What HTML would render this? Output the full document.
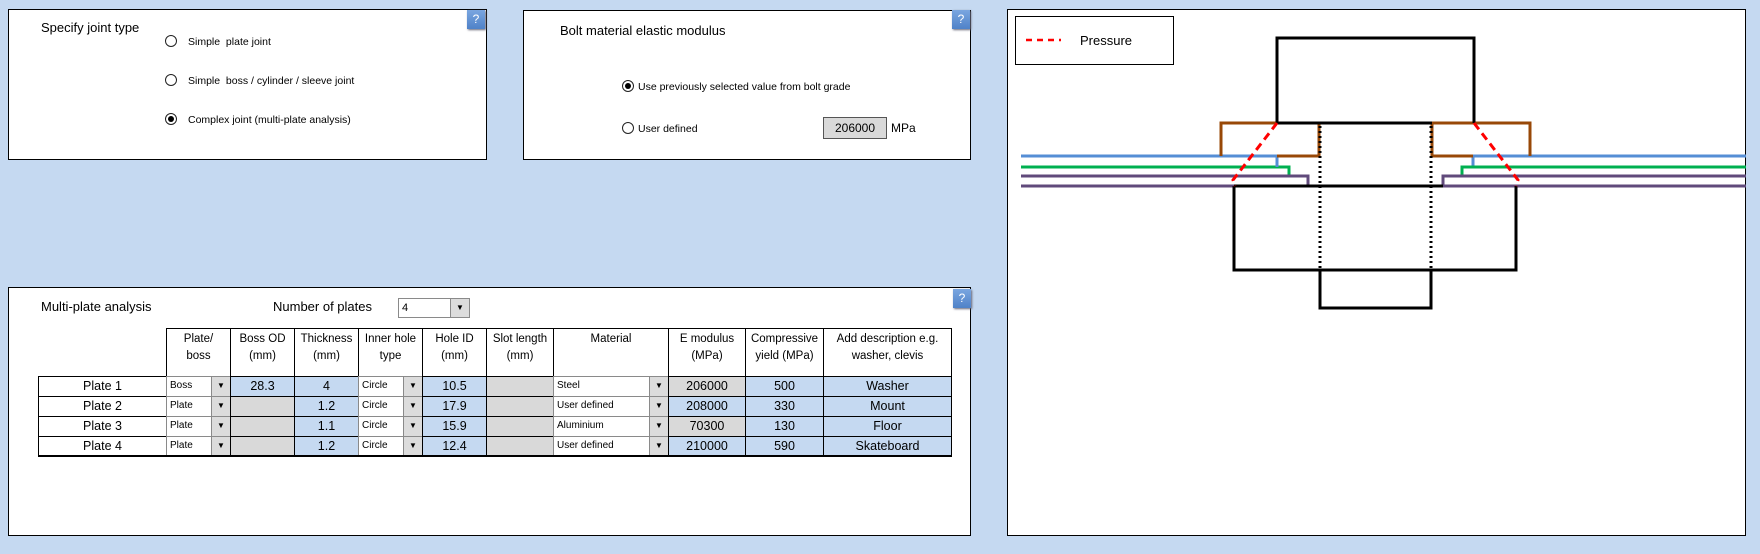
<!DOCTYPE html>
<html><head><meta charset="utf-8"><style>
*{box-sizing:border-box;margin:0;padding:0}
body{width:1760px;height:554px;background:#c5d9f1;position:relative;overflow:hidden;font-family:"Liberation Sans",sans-serif;color:#000}
.p{position:absolute;background:#fff;border:1px solid #000}
.a{position:absolute;white-space:nowrap}
.help{position:absolute;width:18px;height:19px;background:linear-gradient(#7aa6e0,#4f82c8);color:#fff;font-size:12px;text-align:center;line-height:19px;box-shadow:1px 1px 2px #667}
.r{position:absolute;width:12px;height:12px;border:1px solid #222;border-radius:50%;background:#fff}
.r.on::after{content:"";position:absolute;left:2px;top:2px;width:6px;height:6px;border-radius:50%;background:#000}
.sm{font-size:10.5px}
.c{position:absolute;border:1px solid #000;font-size:12.5px;text-align:center;line-height:19px}
.b{background:#c5d9f1}.g{background:#d9d9d9}.w{background:#fff}
.h{position:absolute;border:1px solid #000;background:#fff;font-size:11.5px;text-align:center;line-height:17px;padding-top:2px}
.dd{position:absolute;background:#fff;border:1px solid #8a8a8a;font-size:10px;line-height:18px;padding-left:3px}
.ar{position:absolute;right:0;top:0;bottom:0;width:19px;background:#dcdcdc;border-left:1px solid #8a8a8a;font-size:8px;text-align:center;line-height:18px}
</style></head><body>

<div class="p" style="left:8px;top:9px;width:479px;height:151px"></div>
<div class="help" style="left:467px;top:10px;">?</div>
<div class="a" style="left:41px;top:20px;font-size:13px">Specify joint type</div>
<div class="r" style="left:165px;top:35px"></div><div class="a sm" style="left:188px;top:36px">Simple&nbsp; plate joint</div>
<div class="r" style="left:165px;top:74px"></div><div class="a sm" style="left:188px;top:75px">Simple&nbsp; boss / cylinder / sleeve joint</div>
<div class="r on" style="left:165px;top:113px"></div><div class="a sm" style="left:188px;top:114px">Complex joint (multi-plate analysis)</div>

<div class="p" style="left:523px;top:10px;width:448px;height:150px"></div>
<div class="help" style="left:952px;top:10px;">?</div>
<div class="a" style="left:560px;top:23px;font-size:13px">Bolt material elastic modulus</div>
<div class="r on" style="left:622px;top:80px"></div><div class="a sm" style="left:638px;top:81px">Use previously selected value from bolt grade</div>
<div class="r" style="left:622px;top:122px"></div><div class="a sm" style="left:638px;top:123px">User defined</div>
<div class="a" style="left:823px;top:117px;width:64px;height:22px;background:#d9d9d9;border:1px solid #555;font-size:12px;text-align:center;line-height:20px">206000</div>
<div class="a" style="left:891px;top:121px;font-size:12px">MPa</div>

<div class="p" style="left:1007px;top:9px;width:739px;height:527px"></div>
<svg class="a" style="left:1007px;top:0" width="740" height="340" viewBox="1007 0 740 340">
<rect x="1015.5" y="16.5" width="158" height="48" fill="none" stroke="#000"/>
<line x1="1026" y1="40" x2="1061" y2="40" stroke="#f00" stroke-width="2.5" stroke-dasharray="6,5"/>
<text x="1080" y="45" font-family="Liberation Sans" font-size="13">Pressure</text>
<g fill="none" stroke-width="3">
<path d="M1021 167H1289V176" stroke="#00b050"/>
<path d="M1021 176H1308V186M1021 186H1234" stroke="#604a7b"/>
<path d="M1021 156H1277V167" stroke="#558ed5"/>
<path d="M1746 156H1473V167" stroke="#558ed5"/>
<path d="M1746 167H1462V176" stroke="#00b050"/>
<path d="M1746 176H1443V186H1746" stroke="#604a7b"/>
<path d="M1221 156V123H1319V156H1277" stroke="#984807"/>
<path d="M1473 156H1432V123H1530V156" stroke="#984807"/>
<path d="M1277 123V38H1474V123M1277 123H1432" stroke="#000"/>
<path d="M1234 186H1443M1234 186V270H1516V186" stroke="#000"/>
<path d="M1320 270V308H1431V270" stroke="#000"/>
<line x1="1320" y1="126" x2="1320" y2="270" stroke="#000" stroke-dasharray="2,3"/>
<line x1="1431" y1="126" x2="1431" y2="270" stroke="#000" stroke-dasharray="2,3"/>
<path d="M1277 123L1233 180L1235 186M1474 123L1518 180L1516 186" stroke="#f00" stroke-dasharray="8,5"/>
</g>
</svg>

<div class="p" style="left:8px;top:287px;width:963px;height:249px"></div>
<div class="help" style="left:953px;top:289px;">?</div>
<div class="a" style="left:41px;top:299px;font-size:13px">Multi-plate analysis</div>
<div class="a" style="left:273px;top:299px;font-size:13px">Number of plates</div>
<div class="dd" style="left:398px;top:298px;width:72px;height:20px;font-size:11px">4<div class="ar">▼</div></div>

<div class="h" style="left:166px;top:328px;width:65px;height:49px">Plate/<br>boss</div>
<div class="h" style="left:230px;top:328px;width:65px;height:49px">Boss OD<br>(mm)</div>
<div class="h" style="left:294px;top:328px;width:65px;height:49px">Thickness<br>(mm)</div>
<div class="h" style="left:358px;top:328px;width:65px;height:49px">Inner hole<br>type</div>
<div class="h" style="left:422px;top:328px;width:65px;height:49px">Hole ID<br>(mm)</div>
<div class="h" style="left:486px;top:328px;width:68px;height:49px">Slot length<br>(mm)</div>
<div class="h" style="left:553px;top:328px;width:116px;height:49px">Material</div>
<div class="h" style="left:668px;top:328px;width:78px;height:49px">E modulus<br>(MPa)</div>
<div class="h" style="left:745px;top:328px;width:79px;height:49px">Compressive<br>yield (MPa)</div>
<div class="h" style="left:823px;top:328px;width:129px;height:49px">Add description e.g.<br>washer, clevis</div>

<div class="c w" style="left:38px;top:376px;width:129px;height:21px">Plate 1</div>
<div class="dd" style="left:166px;top:376px;width:65px;height:21px">Boss<div class="ar">▼</div></div>
<div class="c b" style="left:230px;top:376px;width:65px;height:21px">28.3</div>
<div class="c b" style="left:294px;top:376px;width:65px;height:21px">4</div>
<div class="dd" style="left:358px;top:376px;width:65px;height:21px">Circle<div class="ar">▼</div></div>
<div class="c b" style="left:422px;top:376px;width:65px;height:21px">10.5</div>
<div class="c g" style="left:486px;top:376px;width:68px;height:21px"></div>
<div class="dd" style="left:553px;top:376px;width:116px;height:21px">Steel<div class="ar">▼</div></div>
<div class="c g" style="left:668px;top:376px;width:78px;height:21px">206000</div>
<div class="c b" style="left:745px;top:376px;width:79px;height:21px">500</div>
<div class="c b" style="left:823px;top:376px;width:129px;height:21px">Washer</div>

<div class="c w" style="left:38px;top:396px;width:129px;height:21px">Plate 2</div>
<div class="dd" style="left:166px;top:396px;width:65px;height:21px">Plate<div class="ar">▼</div></div>
<div class="c g" style="left:230px;top:396px;width:65px;height:21px"></div>
<div class="c b" style="left:294px;top:396px;width:65px;height:21px">1.2</div>
<div class="dd" style="left:358px;top:396px;width:65px;height:21px">Circle<div class="ar">▼</div></div>
<div class="c b" style="left:422px;top:396px;width:65px;height:21px">17.9</div>
<div class="c g" style="left:486px;top:396px;width:68px;height:21px"></div>
<div class="dd" style="left:553px;top:396px;width:116px;height:21px">User defined<div class="ar">▼</div></div>
<div class="c b" style="left:668px;top:396px;width:78px;height:21px">208000</div>
<div class="c b" style="left:745px;top:396px;width:79px;height:21px">330</div>
<div class="c b" style="left:823px;top:396px;width:129px;height:21px">Mount</div>

<div class="c w" style="left:38px;top:416px;width:129px;height:21px">Plate 3</div>
<div class="dd" style="left:166px;top:416px;width:65px;height:21px">Plate<div class="ar">▼</div></div>
<div class="c g" style="left:230px;top:416px;width:65px;height:21px"></div>
<div class="c b" style="left:294px;top:416px;width:65px;height:21px">1.1</div>
<div class="dd" style="left:358px;top:416px;width:65px;height:21px">Circle<div class="ar">▼</div></div>
<div class="c b" style="left:422px;top:416px;width:65px;height:21px">15.9</div>
<div class="c g" style="left:486px;top:416px;width:68px;height:21px"></div>
<div class="dd" style="left:553px;top:416px;width:116px;height:21px">Aluminium<div class="ar">▼</div></div>
<div class="c g" style="left:668px;top:416px;width:78px;height:21px">70300</div>
<div class="c b" style="left:745px;top:416px;width:79px;height:21px">130</div>
<div class="c b" style="left:823px;top:416px;width:129px;height:21px">Floor</div>

<div class="c w" style="left:38px;top:436px;width:129px;height:21px">Plate 4</div>
<div class="dd" style="left:166px;top:436px;width:65px;height:21px">Plate<div class="ar">▼</div></div>
<div class="c g" style="left:230px;top:436px;width:65px;height:21px"></div>
<div class="c b" style="left:294px;top:436px;width:65px;height:21px">1.2</div>
<div class="dd" style="left:358px;top:436px;width:65px;height:21px">Circle<div class="ar">▼</div></div>
<div class="c b" style="left:422px;top:436px;width:65px;height:21px">12.4</div>
<div class="c g" style="left:486px;top:436px;width:68px;height:21px"></div>
<div class="dd" style="left:553px;top:436px;width:116px;height:21px">User defined<div class="ar">▼</div></div>
<div class="c b" style="left:668px;top:436px;width:78px;height:21px">210000</div>
<div class="c b" style="left:745px;top:436px;width:79px;height:21px">590</div>
<div class="c b" style="left:823px;top:436px;width:129px;height:21px">Skateboard</div>
<div class="a" style="left:38px;top:455px;width:914px;height:2px;background:#000"></div>
</body></html>
